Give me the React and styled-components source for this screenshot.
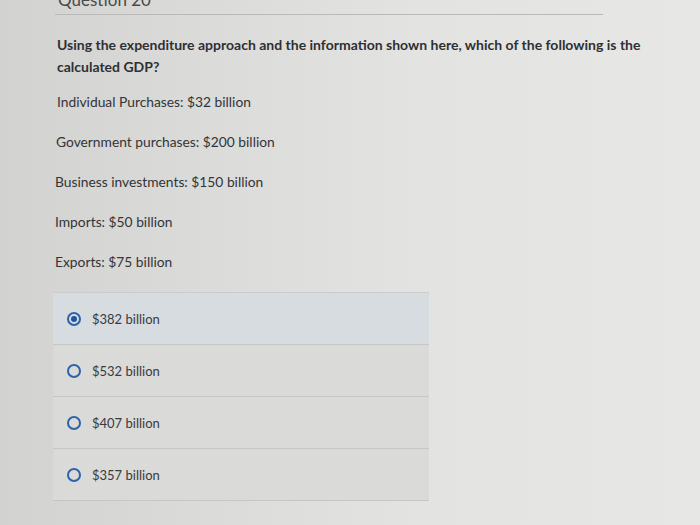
import styled, { createGlobalStyle } from "styled-components";

const Global = createGlobalStyle`
  html, body {
    margin: 0;
    padding: 0;
  }
  body {
    width: 700px;
    height: 525px;
    overflow: hidden;
    font-family: Lato, "Open Sans", Arial, sans-serif;
    background: linear-gradient(90deg, #d2d2d0 0%, #dbdbd9 30%, #e3e3e1 60%, #e7e7e5 100%);
    color: #303236;
  }
`;

const Page = styled.div`
  display: flex;
  flex-direction: column;
  padding: 0 0 0 55px;
  height: 525px;
  box-sizing: border-box;
`;

const Header = styled.div`
  height: 14px;
  width: 545px;
  display: flex;
  align-items: flex-end;
  overflow: hidden;
  border-bottom: 1px solid #b9b9b7;
  padding-left: 3px;
`;

const HeaderText = styled.span`
  font-size: 17px;
  line-height: 17px;
  margin-bottom: 6px;
  color: #4a4a4a;
`;

const Question = styled.p`
  margin: 19px 0 0 2px;
  width: 600px;
  font-size: 14px;
  font-weight: 700;
  line-height: 22px;
  color: #2e3034;
`;

const Facts = styled.div`
  display: flex;
  flex-direction: column;
  gap: 21px;
  margin-top: 14px;
`;

const Fact = styled.div`
  font-size: 13.8px;
  line-height: 19px;
  color: #323438;
  padding-left: ${(p) => p.$indent}px;
`;

const Options = styled.div`
  margin-top: 21px;
  width: 376px;
  margin-left: -2px;
  display: flex;
  flex-direction: column;
  border-top: 1px solid #cbcdcd;
`;

const Option = styled.label`
  display: flex;
  align-items: center;
  gap: 11px;
  height: 51px;
  padding-left: 14px;
  border-bottom: 1px solid #c6c6c4;
  background: ${(p) => (p.$selected ? "#d6dce0" : "#dadad8")};
  font-size: 13px;
  color: #393b3f;
`;

const Radio = styled.span`
  width: 10px;
  height: 10px;
  border-radius: 50%;
  border: 2px solid #2d63a8;
  display: flex;
  align-items: center;
  justify-content: center;
  &::after {
    content: "";
    width: 6px;
    height: 6px;
    border-radius: 50%;
    background: ${(p) => (p.$checked ? "#1f55a0" : "transparent")};
  }
`;

const facts = [
  ["Individual Purchases: $32 billion", 2],
  ["Government purchases: $200 billion", 1],
  ["Business investments: $150 billion", 0],
  ["Imports: $50 billion", -1],
  ["Exports: $75 billion", -2],
];

const options = ["$382 billion", "$532 billion", "$407 billion", "$357 billion"];

export default function App() {
  return (
    <>
      <Global />
      <Page>
        <Header>
          <HeaderText>Question 20</HeaderText>
        </Header>
        <Question>
          Using the expenditure approach and the information shown here, which of the following is the
          calculated GDP?
        </Question>
        <Facts>
          {facts.map(([t, i]) => (
            <Fact key={t} $indent={i}>
              {t}
            </Fact>
          ))}
        </Facts>
        <Options>
          {options.map((o, i) => (
            <Option key={o} $selected={i === 0}>
              <Radio $checked={i === 0} />
              {o}
            </Option>
          ))}
        </Options>
      </Page>
    </>
  );
}
